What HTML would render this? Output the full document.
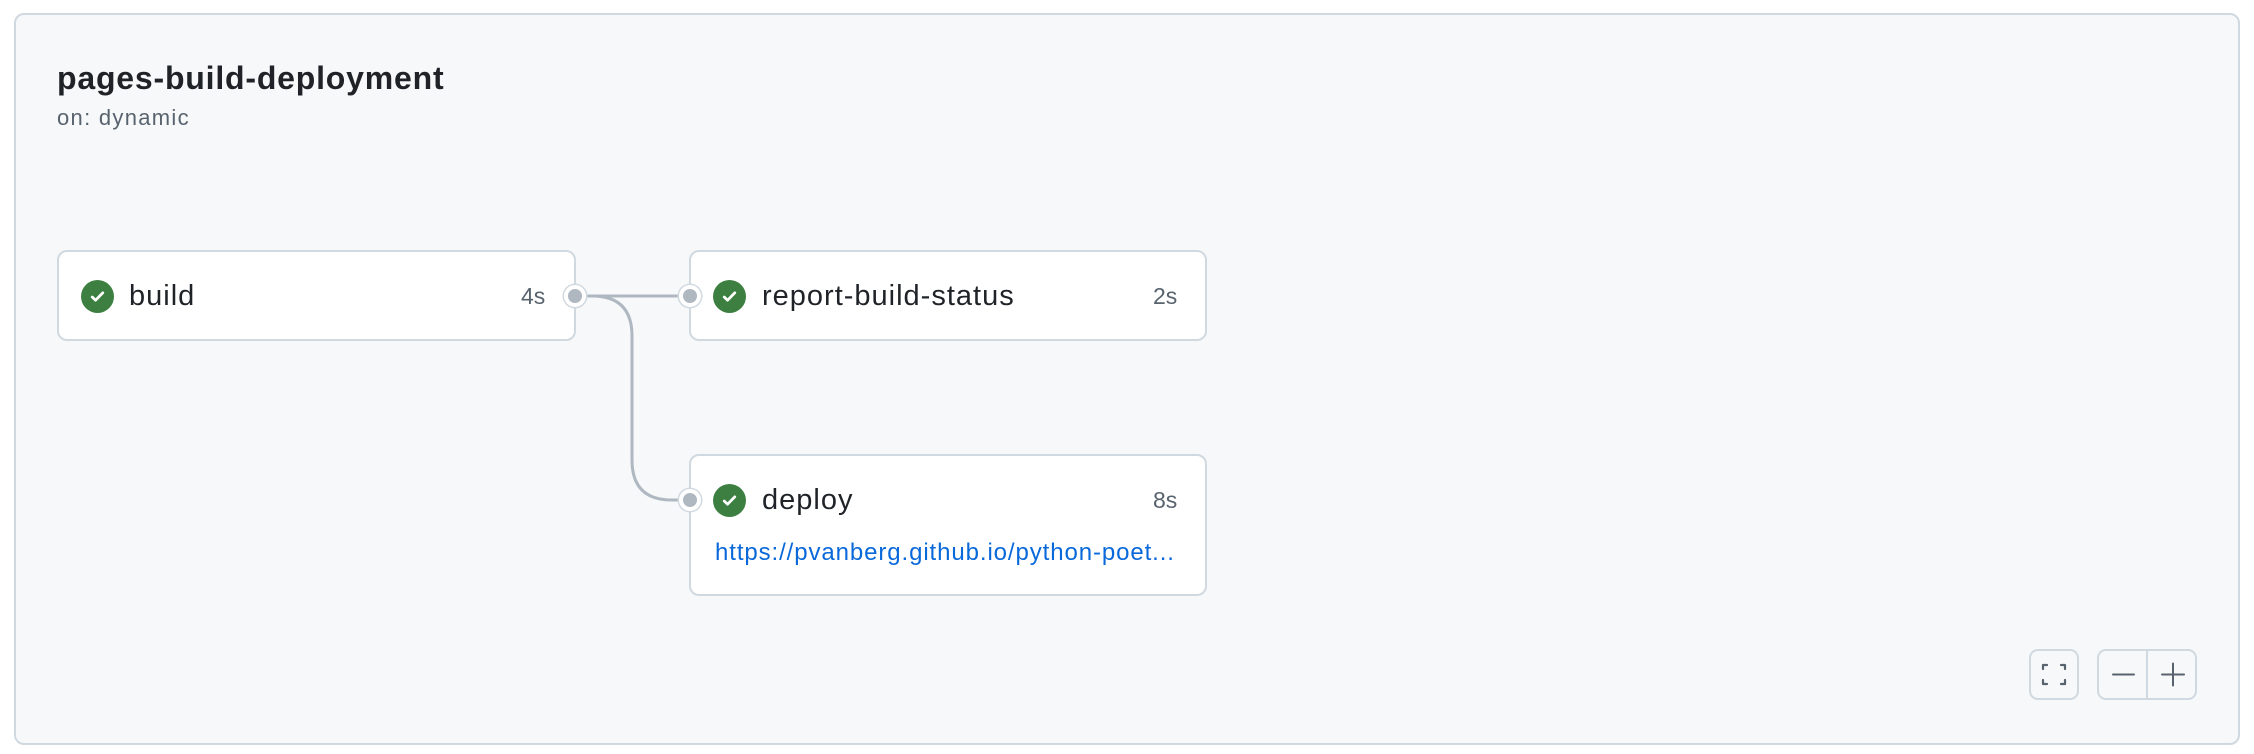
<!DOCTYPE html>
<html><head><meta charset="utf-8"><style>
body{margin:0;width:2254px;height:754px;background:#fff;font-family:"Liberation Sans",sans-serif;position:relative;overflow:hidden}
.c{position:absolute;left:14px;top:13px;width:2222px;height:728px;border:2px solid #d1d9e0;border-radius:10px;background:#f6f8fa}
.t{position:absolute;left:57px;top:60px;font-size:32px;font-weight:bold;color:#1f2328;letter-spacing:0.8px}
.s{position:absolute;left:57px;top:105px;font-size:22px;color:#59636e;letter-spacing:1.3px}
.b{position:absolute;background:#fff;border:2px solid #d1d9e0;border-radius:10px;box-sizing:border-box}
.ic{position:absolute;width:33px;height:33px;border-radius:50%;background:#3c7f40}
.ic svg{position:absolute;left:7px;top:7px}
.n{position:absolute;font-size:29px;color:#1f2328;line-height:32px;letter-spacing:1px}
.d{position:absolute;font-size:23px;color:#59636e;line-height:32px}
.p{position:absolute;width:14px;height:14px;border-radius:50%;background:#afb8c1;border:4px solid #fff;box-shadow:0 0 0 1.5px #d1d9e0}
.btn{position:absolute;border:2px solid #d1d9e0;border-radius:9px;background:#f6f8fa;box-sizing:border-box}
</style></head><body>
<div class="c"></div>
<div class="t">pages-build-deployment</div>
<div class="s">on: dynamic</div>
<svg style="position:absolute;left:0;top:0" width="2254" height="754"><path d="M575 296 H690 M585 296 H592 Q632 296 632 336 V460 Q632 500 672 500 H690" fill="none" stroke="#afb8c1" stroke-width="3"/></svg>
<div class="b" style="left:57px;top:250px;width:519px;height:91px"></div>
<div class="ic" style="left:81px;top:280px"><svg width="19" height="19" viewBox="0 0 18 18"><path d="M4 9.5l3.2 3L14 5.5" stroke="#fff" stroke-width="2.6" fill="none" stroke-linecap="round" stroke-linejoin="round"/></svg></div>
<div class="n" style="left:129px;top:280px">build</div>
<div class="d" style="left:521px;top:280px">4s</div>
<div class="b" style="left:689px;top:250px;width:518px;height:91px"></div>
<div class="ic" style="left:713px;top:280px"><svg width="19" height="19" viewBox="0 0 18 18"><path d="M4 9.5l3.2 3L14 5.5" stroke="#fff" stroke-width="2.6" fill="none" stroke-linecap="round" stroke-linejoin="round"/></svg></div>
<div class="n" style="left:762px;top:280px">report-build-status</div>
<div class="d" style="left:1153px;top:280px">2s</div>
<div class="b" style="left:689px;top:454px;width:518px;height:142px"></div>
<div class="ic" style="left:713px;top:484px"><svg width="19" height="19" viewBox="0 0 18 18"><path d="M4 9.5l3.2 3L14 5.5" stroke="#fff" stroke-width="2.6" fill="none" stroke-linecap="round" stroke-linejoin="round"/></svg></div>
<div class="n" style="left:762px;top:484px">deploy</div>
<div class="d" style="left:1153px;top:484px">8s</div>
<div style="position:absolute;left:715px;top:539px;font-size:24px;color:#0969da;letter-spacing:0.9px">https://pvanberg.github.io/python-poet...</div>
<div class="p" style="left:564px;top:285px"></div>
<div class="p" style="left:679px;top:285px"></div>
<div class="p" style="left:679px;top:489px"></div>
<div class="btn" style="left:2029px;top:649px;width:50px;height:51px"><svg width="46" height="47" viewBox="0 0 46 47"><path d="M12 18v-4h4M30 14h4v4M34 29v4h-4M16 33h-4v-4" stroke="#59636e" stroke-width="2.2" fill="none" stroke-linecap="round" stroke-linejoin="round"/></svg></div>
<div class="btn" style="left:2097px;top:649px;width:100px;height:51px"><svg width="96" height="47" viewBox="0 0 96 47"><path d="M14 23.5h21M63 23.5h22M74 12.5v22" stroke="#59636e" stroke-width="2" stroke-linecap="round"/><path d="M48 0v47" stroke="#d1d9e0" stroke-width="2"/></svg></div>
</body></html>
